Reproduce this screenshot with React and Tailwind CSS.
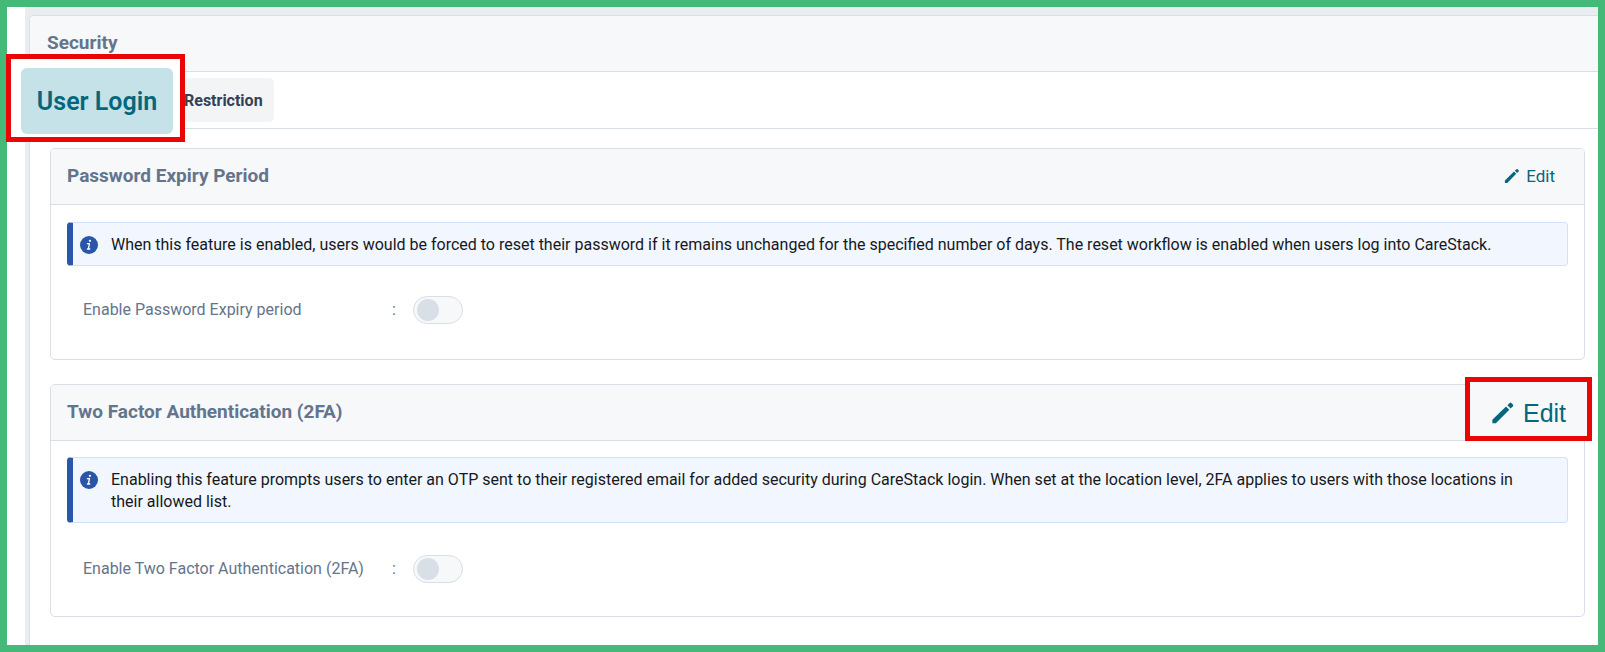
import React, { useState } from "react";

function PencilIcon({ className }) {
  return (
    <svg viewBox="0 0 16 16" fill="currentColor" className={className} aria-hidden="true">
      <path d="M.9 12.5 10 3.6l2.2 2.2-9 9.1H.9z" />
      <path d="m10.9 2.8 1.5-1.5a.9.9 0 0 1 1.2 0l1 1a.9.9 0 0 1 0 1.2l-1.5 1.5z" />
    </svg>
  );
}

function InfoIcon() {
  return (
    <svg viewBox="0 0 18 18" className="mt-[2px] h-[18px] w-[18px] shrink-0" aria-hidden="true">
      <circle cx="9" cy="9" r="9" fill="#2a56a8" />
      <circle cx="9.9" cy="4.8" r="1.1" fill="#fff" />
      <path
        d="M7.4 7.7h2.1L8.3 13h1.5M7.4 13h1"
        fill="none"
        stroke="#fff"
        strokeWidth="1.3"
        strokeLinecap="round"
        strokeLinejoin="round"
      />
    </svg>
  );
}

function Notice({ children }) {
  return (
    <div className="flex gap-[13px] rounded-[4px] border border-l-6 border-[#d3e1f8] border-l-[#2a56a8] bg-[#f1f6ff] pb-[9px] pl-[7px] pr-8 pt-[11px]">
      <InfoIcon />
      <p className="text-[16px] leading-[22px] text-[#16191d]">{children}</p>
    </div>
  );
}

function SwitchRow({ id, label }) {
  const [checked, setChecked] = useState(false);

  return (
    <div className="flex items-center pl-4">
      <label htmlFor={id} className="w-[309px] text-[16px] leading-6 text-[#64748b]">
        {label}
      </label>
      <span className="w-[21px] text-[16px] leading-6 text-[#64748b]">:</span>
      <input
        id={id}
        type="checkbox"
        role="switch"
        checked={checked}
        onChange={(e) => setChecked(e.target.checked)}
        className="h-7 w-[50px] appearance-none rounded-full border border-[#d8dfe7] bg-[#f6f8fa] px-[3px] py-[2px] before:block before:size-[22px] before:rounded-full before:bg-[#d8dfe7] checked:bg-[#c5e2e8] checked:before:translate-x-5"
      />
    </div>
  );
}

function Card({ title, action, children }) {
  return (
    <section className="rounded-[5px] border border-[#d8dfe7] bg-white">
      <header className="relative flex h-14 items-center justify-between rounded-t-[4px] border-b border-[#d8dfe7] bg-[#f6f8fa] pb-[2px] pl-4 pr-[29px]">
        <h2 className="text-[19px] font-bold leading-6 text-[#64748b]">{title}</h2>
        {action}
      </header>
      <div className="px-4">{children}</div>
    </section>
  );
}

function App() {
  return (
    <div className="flex min-h-screen flex-col border-7 border-[#44b978] bg-white pl-[18px] font-[Roboto,sans-serif]">
      <div className="flex grow flex-col bg-[#e9edf0] pl-1 pt-2">
        <main className="grow rounded-tl-[5px] border-l border-t border-[#d8dfe7] bg-white">
          <header className="flex h-14 items-center rounded-tl-[4px] border-b border-[#d8dfe7] bg-[#f6f8fa] pb-[2px] pl-[17px]">
            <h1 className="text-[19px] font-bold leading-6 text-[#64748b]">Security</h1>
          </header>

          <nav className="relative flex h-[57px] items-center border-b border-[#d8dfe7] pl-[154px]">
            <button className="h-11 rounded-[5px] bg-[#f3f4f6] pr-[11px] pt-[2px] text-[16px] font-bold text-[#334155]">
              Restriction
            </button>
            {/* Highlighted active tab */}
            <div className="absolute -left-6 -top-[18px] h-[88px] w-[179px] border-5 border-[#ea0606] bg-white px-[10px] py-[9px]">
              <button className="h-[66px] w-[152px] rounded-[6px] bg-[#c5e2e8] pt-[2px] text-[25px] font-semibold text-[#05677d]">
                User Login
              </button>
            </div>
          </nav>

          <div className="flex flex-col gap-6 pb-6 pl-5 pr-[13px] pt-[19px]">
            <Card
              title="Password Expiry Period"
              action={
                <button className="flex items-center gap-[6px] text-[17px] leading-6 text-[#05677d]">
                  <PencilIcon className="size-4" />
                  Edit
                </button>
              }
            >
              <div className="pb-[35px] pt-[17px]">
                <Notice>
                  When this feature is enabled, users would be forced to reset their password if it remains unchanged for
                  the specified number of days. The reset workflow is enabled when users log into CareStack.
                </Notice>
                <div className="pt-[30px]">
                  <SwitchRow id="password-expiry" label="Enable Password Expiry period" />
                </div>
              </div>
            </Card>

            <Card
              title="Two Factor Authentication (2FA)"
              action={
                <div className="absolute -right-2 -top-2 flex h-16 w-[127px] items-center justify-center border-5 border-[#ea0606] bg-[#f7f8fa] pt-2">
                  <button className="flex items-center gap-2 font-[Liberation_Sans,sans-serif] text-[25px] leading-8 text-[#05677d]">
                    <PencilIcon className="size-6" />
                    Edit
                  </button>
                </div>
              }
            >
              <div className="pb-[33px] pt-4">
                <Notice>
                  Enabling this feature prompts users to enter an OTP sent to their registered email for added security
                  during CareStack login. When set at the location level, 2FA applies to users with those locations in
                  their allowed list.
                </Notice>
                <div className="pt-8">
                  <SwitchRow id="two-factor" label="Enable Two Factor Authentication (2FA)" />
                </div>
              </div>
            </Card>
          </div>
        </main>
      </div>
    </div>
  );
}

export default App;
